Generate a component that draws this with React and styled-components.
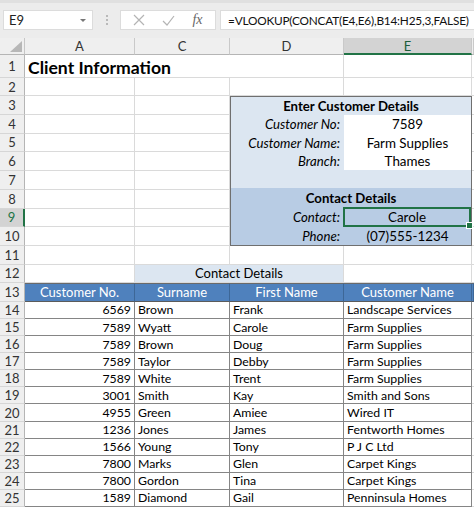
import React from "react";
import styled, { createGlobalStyle, css } from "styled-components";

const FONT = `"Lato", "Liberation Sans", sans-serif`;

const GlobalStyle = createGlobalStyle`
  html, body { margin: 0; padding: 0; background: #ffffff; }
  body { font-family: ${FONT}; color: #000; }
  *, *::before, *::after { box-sizing: border-box; }
`;

const Window = styled.div`
  width: 474px;
  height: 508px;
  overflow: hidden;
  background: #ffffff;
  display: flex;
  flex-direction: column;
`;

/* ---------- formula bar ---------- */
const FormulaBar = styled.div`
  flex: none;
  height: 38px;
  background: #ececec;
  border-top: 3px solid #e0e0e0;
  display: flex;
  align-items: flex-start;
  padding: 7px 0 0 3px;
`;

const Box = styled.div`
  height: 20px;
  background: #ffffff;
  border: 1px solid #dcdcdc;
  display: flex;
  align-items: center;
  font-size: 13px;
  color: #222;
`;

const NameBox = styled(Box)`
  width: 90px;
  padding: 0 6px 0 5px;
  justify-content: space-between;
`;

const Caret = styled.span`
  width: 0;
  height: 0;
  border-left: 3px solid transparent;
  border-right: 3px solid transparent;
  border-top: 3px solid #777;
`;

const Dots = styled.div`
  width: 27px;
  height: 20px;
  display: flex;
  flex-direction: column;
  align-items: center;
  justify-content: center;
  gap: 2px;
  span {
    width: 2px;
    height: 2px;
    border-radius: 50%;
    background: #a8a8a8;
  }
`;

const IconBox = styled(Box)`
  width: 96px;
  justify-content: space-around;
  padding: 0 4px;
`;

const Fx = styled.span`
  font-family: "Liberation Serif", "DejaVu Serif", serif;
  font-style: italic;
  font-size: 14px;
  color: #666;
`;

const FormulaBox = styled(Box)`
  flex: 1;
  margin-left: 4px;
  margin-right: -4px;
  padding-left: 7px;
  white-space: nowrap;
  overflow: hidden;
  font-size: 11.8px;
  letter-spacing: -0.2px;
  color: #111;
`;

/* ---------- sheet grid ---------- */
const Sheet = styled.div`
  flex: none;
  display: grid;
  grid-template-columns: 25px 110px 95px 114px 128px 2px;
  grid-template-rows:
    17px 23px 18px
    repeat(9, 18.78px)
    18px 19px
    repeat(12, 17.1px);
  font-size: 13px;
`;

const Corner = styled.div`
  background: #efefef;
  border-right: 1px solid #c6c6c6;
  border-bottom: 1px solid #b5b5b5;
  position: relative;
  &::after {
    content: "";
    position: absolute;
    right: 2px;
    bottom: 2px;
    width: 0;
    height: 0;
    border-left: 12px solid transparent;
    border-bottom: 11px solid #b7b7b7;
  }
`;

const ColHead = styled.div`
  background: ${(p) => (p.$selected ? "#d3d3d3" : "#efefef")};
  border-right: 1px solid #c9c9c9;
  border-bottom: ${(p) => (p.$selected ? "2px solid #217346" : "1px solid #b5b5b5")};
  display: flex;
  align-items: center;
  justify-content: center;
  color: ${(p) => (p.$selected ? "#1e5e3a" : "#333")};
  font-size: 13px;
  overflow: hidden;
`;

const RowHead = styled.div`
  background: ${(p) => (p.$selected ? "#d3d3d3" : "#efefef")};
  border-right: ${(p) => (p.$selected ? "2px solid #217346" : "1px solid #b5b5b5")};
  border-bottom: 1px solid #d6d6d6;
  display: flex;
  align-items: center;
  justify-content: center;
  color: ${(p) => (p.$selected ? "#217346" : "#333")};
  font-size: 13px;
`;

const Cell = styled.div`
  min-width: 0;
  display: flex;
  align-items: center;
  padding: 0 3px;
  white-space: nowrap;
  border-right: 1px solid #dadada;
  border-bottom: 1px solid #dadada;
  background: ${(p) => p.$bg || "transparent"};
  justify-content: ${(p) =>
    p.$align === "right" ? "flex-end" : p.$align === "center" ? "center" : "flex-start"};
  ${(p) => p.$span && css`grid-column: span ${p.$span};`}
  ${(p) =>
    p.$title &&
    css`
      font-size: 17.6px;
      font-weight: 700;
      padding-top: 2px;
      border-right: none;
    `}
  ${(p) =>
    p.$table &&
    css`
      font-size: 12.3px;
      border-right: 1px solid #858585;
      border-bottom: 1px solid #858585;
    `}
`;

const HeadCell = styled.div`
  background: #4f81bd;
  color: #ffffff;
  display: flex;
  align-items: center;
  justify-content: center;
  white-space: nowrap;
  border-right: 1px solid #3d6797;
  border-top: 1px solid #6a6a6a;
  border-bottom: 1px solid #5b5b5b;
`;

/* ---------- input panel (D3:E10) ---------- */
const Panel = styled.div`
  grid-column: 4 / 6;
  grid-row: 4 / 12;
  display: grid;
  grid-template-columns: 113px 1fr;
  grid-template-rows: repeat(8, 1fr);
  border: 1px solid #6f6f6f;
  background: linear-gradient(
    to bottom,
    #dce6f1 0,
    #dce6f1 calc(62.5% - 1px),
    #b8cce4 calc(62.5% - 1px)
  );
  font-size: 13.4px;
`;

const PanelHeading = styled.div`
  grid-column: span 2;
  display: flex;
  align-items: center;
  justify-content: center;
  font-weight: 700;
  font-size: 13.2px;
`;

const PanelLabel = styled.div`
  display: flex;
  align-items: center;
  justify-content: flex-end;
  padding-right: 4px;
  font-style: italic;
  white-space: nowrap;
  font-size: 13.2px;
`;

const PanelValue = styled.div`
  position: relative;
  display: flex;
  align-items: center;
  justify-content: center;
  white-space: nowrap;
  background: ${(p) => (p.$white ? "#ffffff" : "transparent")};
  ${(p) =>
    p.$selected &&
    css`
      border: 2px solid #217346;
      margin-left: -1px;
    `}
`;

const PanelGap = styled.div`
  grid-column: span 2;
`;

const FillHandle = styled.span`
  position: absolute;
  right: -3px;
  bottom: -3px;
  width: 5px;
  height: 5px;
  background: #217346;
  outline: 1px solid #ffffff;
`;

const data = [
  [14, "6569", "Brown", "Frank", "Landscape Services"],
  [15, "7589", "Wyatt", "Carole", "Farm Supplies"],
  [16, "7589", "Brown", "Doug", "Farm Supplies"],
  [17, "7589", "Taylor", "Debby", "Farm Supplies"],
  [18, "7589", "White", "Trent", "Farm Supplies"],
  [19, "3001", "Smith", "Kay", "Smith and Sons"],
  [20, "4955", "Green", "Amiee", "Wired IT"],
  [21, "1236", "Jones", "James", "Fentworth Homes"],
  [22, "1566", "Young", "Tony", "P J C Ltd"],
  [23, "7800", "Marks", "Glen", "Carpet Kings"],
  [24, "7800", "Gordon", "Tina", "Carpet Kings"],
  [25, "1589", "Diamond", "Gail", "Penninsula Homes"],
];

function XIcon() {
  return (
    <svg width="12" height="12" viewBox="0 0 12 12">
      <path d="M1 1 L11 11 M11 1 L1 11" stroke="#b4b4b4" strokeWidth="1.2" fill="none" />
    </svg>
  );
}

function CheckIcon() {
  return (
    <svg width="13" height="11" viewBox="0 0 13 11">
      <path d="M1 6 L5 10 L12 1" stroke="#b4b4b4" strokeWidth="1.2" fill="none" />
    </svg>
  );
}

export default function App() {
  const blankRow = (n, sel) => (
    <React.Fragment key={n}>
      <RowHead $selected={sel}>{n}</RowHead>
      <Cell />
      <Cell />
      <Cell />
    </React.Fragment>
  );

  return (
    <Window>
      <GlobalStyle />
      <FormulaBar>
        <NameBox>
          <span>E9</span>
          <Caret />
        </NameBox>
        <Dots>
          <span />
          <span />
          <span />
        </Dots>
        <IconBox>
          <XIcon />
          <CheckIcon />
          <Fx>fx</Fx>
        </IconBox>
        <FormulaBox>=VLOOKUP(CONCAT(E4,E6),B14:H25,3,FALSE)</FormulaBox>
      </FormulaBar>

      <Sheet>
        <Corner />
        <ColHead>A</ColHead>
        <ColHead>C</ColHead>
        <ColHead>D</ColHead>
        <ColHead $selected>E</ColHead>
        <ColHead />

        <RowHead>1</RowHead>
        <Cell $title $span={2}>Client Information</Cell>
        <Cell />
        <Cell />
        <Cell />

        <RowHead>2</RowHead>
        <Cell />
        <Cell />
        <Cell />
        <Cell />
        <Cell />

        <Panel>
          <PanelHeading>Enter Customer Details</PanelHeading>
          <PanelLabel>Customer No:</PanelLabel>
          <PanelValue $white>7589</PanelValue>
          <PanelLabel>Customer Name:</PanelLabel>
          <PanelValue $white>Farm Supplies</PanelValue>
          <PanelLabel>Branch:</PanelLabel>
          <PanelValue $white>Thames</PanelValue>
          <PanelGap />
          <PanelHeading>Contact Details</PanelHeading>
          <PanelLabel>Contact:</PanelLabel>
          <PanelValue $selected>
            Carole
            <FillHandle />
          </PanelValue>
          <PanelLabel>Phone:</PanelLabel>
          <PanelValue>(07)555-1234</PanelValue>
        </Panel>

        {[3, 4, 5, 6, 7, 8, 9, 10].map((n) => blankRow(n, n === 9))}

        <RowHead>11</RowHead>
        <Cell />
        <Cell />
        <Cell />
        <Cell />
        <Cell />

        <RowHead>12</RowHead>
        <Cell />
        <Cell $span={2} $align="center" $bg="#dce6f1">
          Contact Details
        </Cell>
        <Cell />
        <Cell />

        <RowHead>13</RowHead>
        <HeadCell>Customer No.</HeadCell>
        <HeadCell>Surname</HeadCell>
        <HeadCell>First Name</HeadCell>
        <HeadCell>Customer Name</HeadCell>
        <HeadCell />

        {data.map(([n, no, sur, first, cust]) => (
          <React.Fragment key={n}>
            <RowHead>{n}</RowHead>
            <Cell $table $align="right">{no}</Cell>
            <Cell $table>{sur}</Cell>
            <Cell $table>{first}</Cell>
            <Cell $table>{cust}</Cell>
            <Cell />
          </React.Fragment>
        ))}
      </Sheet>
    </Window>
  );
}
